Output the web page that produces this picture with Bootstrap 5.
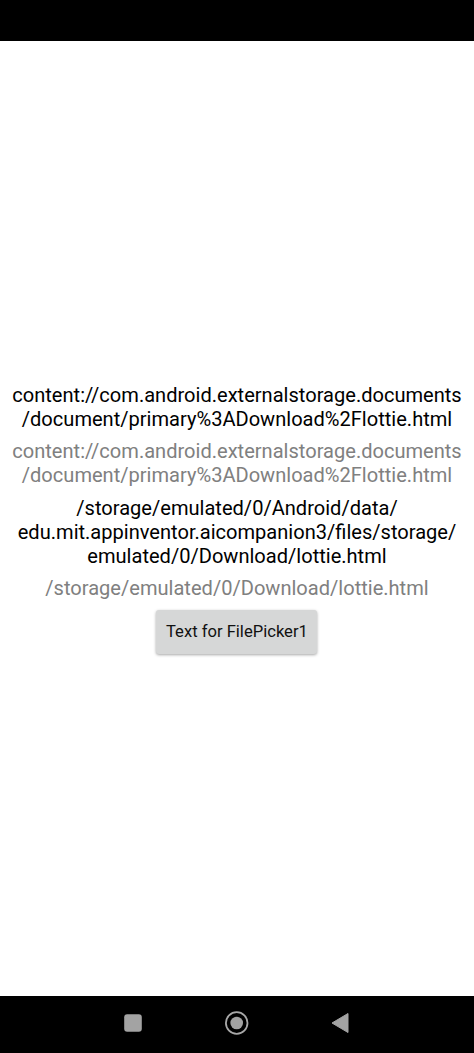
<!DOCTYPE html>
<html lang="en">
<head>
<meta charset="utf-8">
<title>File picker</title>
<link href="https://cdn.jsdelivr.net/npm/bootstrap@5.3.0/dist/css/bootstrap.min.css" rel="stylesheet">
<style>
html, body { height: 100%; }
body { font-family: Roboto, sans-serif; background: #fff; }
.top-strip { height: 41px; background: #000; flex: none; }
.bottom-strip { height: 57.5px; background: #000; flex: none; padding-bottom: 3px; }
.content-area { min-height: 0; padding-top: 341.75px; }
.path-text { font-size: 20.07px; line-height: 24px; margin: 0 0 8.5px; color: #000; }
.path-muted { color: #808080; }
.picker-btn { background: #d6d7d7; color: #111; font-size: 16.6px; line-height: 20px; padding: 12px 10px; border: 0; border-radius: 3px; width: 161px; margin: 1.25px 1px 0 0; box-shadow: 0 1px 3px rgba(0,0,0,.35); white-space: nowrap; }
.nav-glyphs { gap: 81px; }
</style>
</head>
<body class="d-flex flex-column">
<div class="top-strip"></div>
<main class="content-area flex-grow-1 d-flex flex-column align-items-center text-center">
<p class="path-text">content://com.android.externalstorage.documents<br>/document/primary%3ADownload%2Flottie.html</p>
<p class="path-text path-muted">content://com.android.externalstorage.documents<br>/document/primary%3ADownload%2Flottie.html</p>
<p class="path-text">/storage/emulated/0/Android/data/<br>edu.mit.appinventor.aicompanion3/files/storage/<br>emulated/0/Download/lottie.html</p>
<p class="path-text path-muted">/storage/emulated/0/Download/lottie.html</p>
<button type="button" class="btn picker-btn">Text for FilePicker1</button>
</main>
<nav class="bottom-strip d-flex align-items-center justify-content-center nav-glyphs">
<svg width="20" height="20" viewBox="0 0 20 20"><rect x="0.200" y="1.200" width="17.600" height="17.600" rx="3" fill="#a3a3a3"/></svg>
<svg width="24" height="24" viewBox="0 0 24 24"><circle cx="11.700" cy="12" r="10.800" fill="none" stroke="#a8a8a8" stroke-width="1.800"/><circle cx="11.700" cy="12" r="6.300" fill="#a3a3a3"/></svg>
<svg width="20" height="22" viewBox="0 0 20 22"><path d="M18 1.500V20.500L2 11Z" fill="#a3a3a3" stroke="#a3a3a3" stroke-linejoin="round"/></svg>
</nav>
<script src="https://cdn.jsdelivr.net/npm/bootstrap@5.3.0/dist/js/bootstrap.bundle.min.js"></script>
</body>
</html>
